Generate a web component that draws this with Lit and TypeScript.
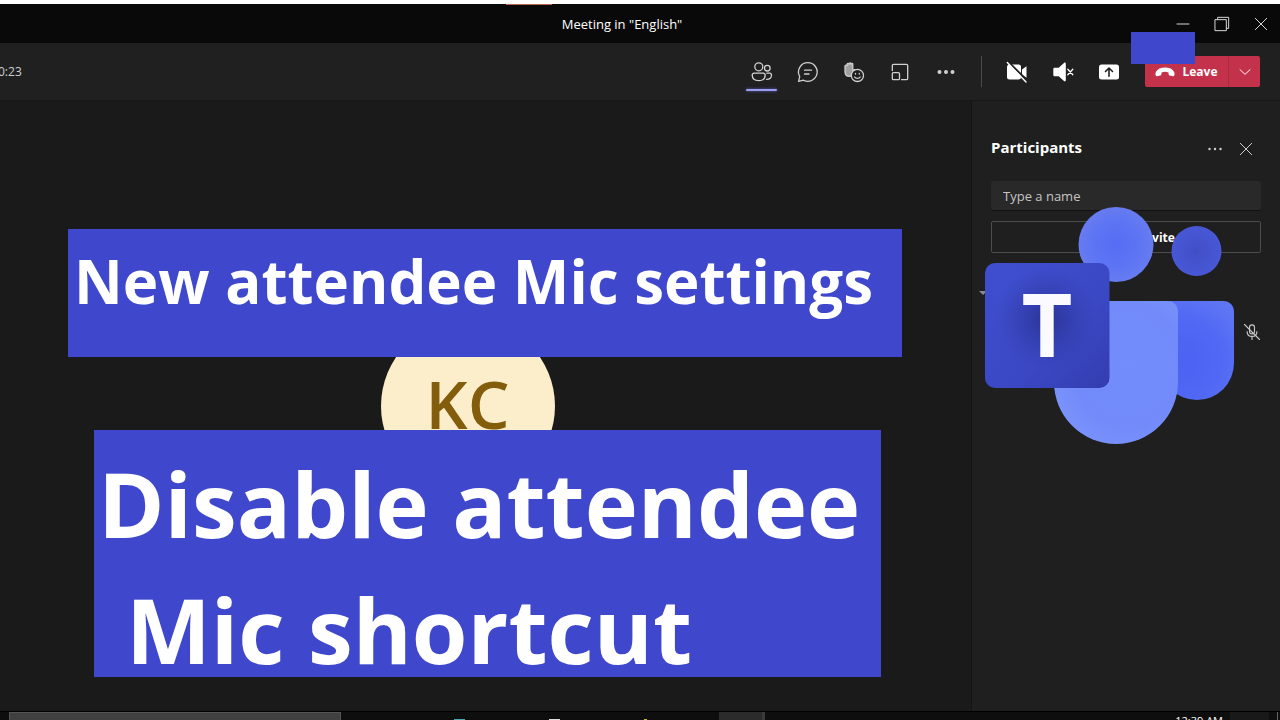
import { LitElement, html, css, svg } from "lit";
import { customElement } from "lit/decorators.js";

const line = (body: unknown, size = 24) => html`<svg
  class="line ${size < 20 ? "compact" : ""}"
  width=${size}
  height=${size}
  viewBox="0 0 24 24"
  aria-hidden="true"
>${body}</svg>`;

const people = line(svg`
  <circle cx="8.8" cy="6.8" r="4"/><circle cx="17.3" cy="8.2" r="2.8"/>
  <path d="M4.100 13.200h9.200a1.900 1.900 0 0 1 1.900 1.900c0 3.600-2.600 5.600-6.400 5.600s-6.600-2-6.600-5.600a1.900 1.900 0 0 1 1.900-1.900z"/>
  <path d="M16.800 13.200h3a1.700 1.700 0 0 1 1.700 1.700c0 2.900-1.700 4.400-5 4.400"/>`);

const chat = line(svg`
  <path d="M11.800 2.700a9.300 9.300 0 1 1-4.300 17.500l-4.900 1.100 1.100-4.700A9.300 9.300 0 0 1 11.800 2.700z"/>
  <path d="M8.500 10.200h7M8.500 14h4.500"/>`);

const reactions = line(svg`
  <path class="palm" d="M3 6v5.800c0 2.900 2 4.600 4.600 4.600 1.500 0 2.400-.6 3.100-1.700l3.300-4.500c-.9-1.100-2.300-.6-3.200.5V4.300c0-1.100-1.600-1.100-1.700 0 0-1.900-2-1.900-2 0 0-1.300-1.900-1.300-1.900 0v1.500C5.200 4.900 3 4.900 3 6z"/>
  <circle class="face" cx="15.400" cy="15.400" r="6.100"/>
  <path d="M12.600 17c1.300 1.900 4.300 1.900 5.600 0M13.500 13.300v.7M17.300 13.300v.7"/>`);

const rooms = line(svg`
  <path d="M4.300 10.500V5.600a1.300 1.300 0 0 1 1.300-1.300h12.800a1.300 1.300 0 0 1 1.300 1.300v12.800a1.300 1.300 0 0 1-1.300 1.300h-4.900"/>
  <rect x="4.300" y="12.600" width="7.200" height="7.100" rx="1.200"/>`);

const dots = (r: number, gap: number) => line(svg`
  <g class="solid"><circle cx=${12 - gap} cy="12" r=${r}/><circle cx="12" cy="12" r=${r}/><circle cx=${12 + gap} cy="12" r=${r}/></g>`);

const cameraOff = line(svg`
  <path class="solid" d="M4.500 4.500h9a2.500 2.500 0 0 1 2.500 2.500v10a2.500 2.500 0 0 1-2.500 2.500h-9A2.500 2.500 0 0 1 2 17V7a2.500 2.500 0 0 1 2.500-2.500zM17 9.500l4.500-3.300v11.600L17 14.500z"/>
  <path class="gap" d="M3 1.500 22.500 21"/>
  <path class="slash" d="M2.300 2.500 21 22"/>`);

const speakerOff = line(svg`
  <path class="solid" d="M3.500 7.800h4.200L13 2.900c.7-.6 1.800-.2 1.800.8v16.600c0 1-1.100 1.400-1.800.8l-5.300-4.900H3.500A1.200 1.200 0 0 1 2.300 15V9a1.200 1.200 0 0 1 1.200-1.200z"/>
  <path d="m16.800 9.300 5 5.400m0-5.400-5 5.400"/>`);

const share = line(svg`
  <rect class="solid" x="2" y="4.500" width="20" height="15" rx="2.500"/>
  <path class="ink" d="M12 16.300V8.200m-3.500 3.300L12 8l3.500 3.500"/>`);

const hangUp = html`<svg width="20" height="12" viewBox="0 0 20 12" aria-hidden="true">
  <path fill="#fff" d="M10 1.500c4.200 0 7.600 1.600 9 4.200.7 1.400.6 2.900.2 3.900-.2.600-.7.800-1.300.7l-3.200-.8c-.6-.1-.9-.5-1-1.100l-.3-2c-2.200-.8-4.600-.8-6.800 0l-.3 2c-.1.600-.4 1-1 1.100l-3.200.8c-.6.100-1.100-.1-1.300-.7-.4-1-.5-2.500.2-3.900 1.400-2.600 4.800-4.200 9-4.200z"/>
</svg>`;

const chevron = line(svg`<path d="m4.500 8.500 7.500 7 7.500-7"/>`, 16);
const cross = line(svg`<path d="m3.500 3.500 17 17m0-17-17 17"/>`, 16);
const minimise = line(svg`<path d="M3 12h18"/>`, 16);
const restore = line(svg`<path d="M2 5.500h16.500V22H2zM5.500 5V2H22v16.500h-3"/>`, 16);
const micOff = line(svg`
  <rect x="8.700" y="2.500" width="6.600" height="12" rx="3.300"/>
  <path d="M5.500 11.500c0 4 2.800 6.300 6.500 6.300s6.500-2.300 6.500-6.300M12 18v4"/>
  <path d="m2 2 20 20"/>`, 18);

@customElement("teams-logo")
export class TeamsLogo extends LitElement {
  static styles = css`
    :host { display: block; }
    svg { display: block; width: 100%; height: auto; }
    text { font-family: "Open Sans", "Noto Sans", sans-serif; font-weight: 700; font-size: 88px; fill: #fafaff; }
  `;
  render() {
    return html`<svg viewBox="0 0 249 237" role="img" aria-label="Teams">
      <defs>
        <radialGradient id="head"><stop offset="0" stop-color="#566df4"/><stop offset=".6" stop-color="#5d74f4"/><stop offset="1" stop-color="#677cf0"/></radialGradient>
        <radialGradient id="small"><stop offset="0" stop-color="#414fc6"/><stop offset="1" stop-color="#4858d6"/></radialGradient>
        <radialGradient id="body" cx=".6" cy=".45" r=".7"><stop offset="0" stop-color="#738dfd"/><stop offset=".6" stop-color="#728afa"/><stop offset="1" stop-color="#7d95fb"/></radialGradient>
        <radialGradient id="side" cx=".45" cy=".6" r=".7"><stop offset="0" stop-color="#4b62f3"/><stop offset=".6" stop-color="#5068f4"/><stop offset="1" stop-color="#5e76f4"/></radialGradient>
        <linearGradient id="tile" x1="0" y1="0" x2="1" y2="1"><stop offset="0" stop-color="#3f4fd0"/><stop offset=".6" stop-color="#3b48c4"/><stop offset="1" stop-color="#333db0"/></linearGradient>
        <radialGradient id="shade"><stop offset="0" stop-color="#262f8c" stop-opacity=".85"/><stop offset="1" stop-color="#303ca8" stop-opacity="0"/></radialGradient>
      </defs>
      <circle cx="131" cy="37.500" r="37.500" fill="url(#head)"/>
      <circle cx="211.500" cy="44" r="25" fill="url(#small)"/>
      <path fill="url(#side)" d="M150 94h89a10 10 0 0 1 10 10v52a37 37 0 0 1-74 0z"/>
      <path fill="url(#body)" d="M69 94h114a10 10 0 0 1 10 10v71a62 62 0 0 1-124 0z"/>
      <rect y="56" width="124.500" height="125" rx="10" fill="url(#tile)"/>
      <ellipse cx="62" cy="112" rx="50" ry="52" fill="url(#shade)"/>
      <text x="62" y="150" text-anchor="middle">T</text>
    </svg>`;
  }
}

@customElement("app-root")
export class AppRoot extends LitElement {
  static styles = css`
    * { box-sizing: border-box; }
    :host {
      display: flex;
      flex-direction: column;
      position: relative;
      height: 100vh;
      overflow: hidden;
      background: #1a1a1a;
      color: #fff;
      font-family: "Open Sans", "Noto Sans", sans-serif;
      font-size: 12px;
    }
    button {
      display: flex;
      align-items: center;
      justify-content: center;
      padding: 0;
      border: 0;
      background: none;
      color: inherit;
      font: inherit;
    }
    svg { display: block; flex: none; }
    .line { fill: none; stroke: currentColor; stroke-width: 1.3; stroke-linecap: round; stroke-linejoin: round; }
    .compact { stroke-width: 1.5; }
    .solid { fill: currentColor; stroke: none; }
    .palm { fill: #a0a0a0; }
    .face { fill: #202020; }
    .gap { stroke: #202020; stroke-width: 2; }
    .slash { stroke-width: 1.4; }
    .ink { stroke: #202020; stroke-width: 1.6; }

    .strip { height: 4px; flex: none; background: #fff; }
    .titlebar {
      position: relative;
      display: grid;
      grid-template-columns: 1fr auto 1fr;
      align-items: center;
      height: 39px;
      flex: none;
      background: #090909;
    }
    .accent { position: absolute; top: 0; left: 506px; width: 46px; height: 1px; background: #b5664a; }
    .title { grid-column: 2; margin: 0 36px 0 0; font-size: 13px; font-weight: 400; }
    .window { display: flex; justify-content: flex-end; color: #d8d8d8; }
    .window button { width: 39px; height: 39px; }

    .toolbar {
      display: flex;
      align-items: center;
      height: 58px;
      flex: none;
      padding-right: 20px;
      background: #202020;
      border-bottom: 1px solid #181818;
      color: #d0d0d0;
    }
    .clock { margin-left: -2px; margin-right: auto; }
    .tool { position: relative; width: 46px; height: 46px; }
    .active::after {
      content: "";
      position: absolute;
      left: 7px;
      right: 8px;
      bottom: 4px;
      height: 2px;
      border-radius: 1px;
      background: #9a9cf0;
      box-shadow: 0 0 3px #6264c8;
    }
    .divider { width: 1px; height: 31px; margin: 0 12px; background: #4a4a4a; }
    .white { color: #fff; }
    .leave { display: flex; height: 31px; margin-left: 13px; border-radius: 2px; overflow: hidden; background: #c4314b; color: #fff; }
    .hang { width: 83px; gap: 7px; font-weight: 700; }
    .more { width: 32px; border-left: 1px solid #a92a41; }

    .content { display: flex; flex: 1; min-height: 0; }
    .stage { position: relative; flex: 1; min-width: 0; display: flex; justify-content: center; padding: 218px 36px 0 0; }
    .avatar {
      display: flex;
      align-items: center;
      justify-content: center;
      width: 174px;
      height: 174px;
      padding-bottom: 6px;
      border-radius: 50%;
      background: #fdeecb;
      color: #835c0c;
      font-size: 66px;
      font-weight: 600;
    }
    .panel { position: relative; width: 309px; flex: none; padding: 32px 19px 0; background: #1f1f1f; border-left: 1px solid #141414; }
    .head { display: flex; align-items: center; height: 32px; }
    .heading { margin: 0 auto 4px 0; font-size: 15px; line-height: 20px; font-weight: 700; }
    .head button { width: 31px; height: 32px; color: #d0d0d0; }
    .name {
      display: block;
      width: 100%;
      height: 30px;
      margin-top: 16px;
      padding: 0 12px;
      border: 0;
      border-bottom: 1px solid #111;
      border-radius: 3px;
      background: #292929;
      color: #fff;
      font: inherit;
      font-size: 13px;
    }
    .name::placeholder { color: #c4c4c4; opacity: 1; }
    .invite { width: 100%; height: 32px; margin-top: 10px; padding-left: 26px; border: 1px solid #4c4c4c; border-radius: 2px; font-weight: 700; }
    .group { width: 8px; height: 16px; margin: 32px 0 0 -12px; }
    .caret { border: 4px solid transparent; border-top-color: #8a8a8a; border-bottom: 0; }
    .person { display: flex; justify-content: flex-end; margin-top: 22px; color: #c8c8c8; }
    .mic { width: 18px; height: 18px; }
    .logo { position: absolute; top: 106px; left: 13px; width: 249px; }

    .banner { position: absolute; background: #3f48cc; font-weight: 700; white-space: nowrap; margin: 0; }
    .first { top: 128px; left: 68px; width: 834px; height: 128px; padding-left: 6px; font-size: 60px; line-height: 104px; }
    .second { top: 329px; left: 94px; width: 787px; height: 247px; padding: 10px 0 0 4px; font-size: 90px; line-height: 126px; }
    .indent { display: block; padding-left: 28px; }
    .patch { position: absolute; top: 32px; right: 85px; width: 64px; height: 32px; background: #3f48cc; }

    .taskbar { display: flex; height: 9px; flex: none; overflow: hidden; background: #0e0e0e; padding-left: 9px; border-top: 1px solid #000; }
    .search { width: 332px; background: #404040; border: 1px solid #555; border-bottom: 0; }
    .apps { display: flex; flex: 1; align-items: flex-end; padding-left: 113px; gap: 84px; }
    .app { width: 11px; height: 1px; }
    .teal { background: #4aa5b5; }
    .pale { background: #ddd; }
    .gold { width: 3px; background: #c9b02e; }
    .open { align-self: stretch; width: 46px; height: auto; margin-left: -12px; background: #2b2b2b; border-right: 3px solid #3a3a3a; }
    .time { height: 9px; padding-top: 3px; font-size: 11px; line-height: 12px; margin-right: 7px; }
    .tray { width: 39px; margin-right: 8px; background: #191919; }
    .edge { width: 1px; margin-right: 2px; background: #666; }
  `;

  private tool(label: string, icon: unknown, extra = "") {
    return html`<button class="tool ${extra}" aria-label=${label}>${icon}</button>`;
  }

  render() {
    return html`
      <div class="strip"></div>
      <header class="titlebar">
        <span class="accent"></span>
        <h1 class="title">Meeting in "English"</h1>
        <div class="window">
          <button aria-label="Minimise">${minimise}</button>
          <button aria-label="Restore">${restore}</button>
          <button aria-label="Close">${cross}</button>
        </div>
      </header>
      <nav class="toolbar">
        <span class="clock">0:23</span>
        ${this.tool("Participants", people, "active")}
        ${this.tool("Chat", chat)}
        ${this.tool("Reactions", reactions)}
        ${this.tool("Rooms", rooms)}
        ${this.tool("More", dots(2, 6.5))}
        <span class="divider"></span>
        ${this.tool("Camera off", cameraOff, "white")}
        ${this.tool("Speaker off", speakerOff, "white")}
        ${this.tool("Share", share, "white")}
        <div class="leave">
          <button class="hang">${hangUp}Leave</button>
          <button class="more" aria-label="Leave options">${chevron}</button>
        </div>
      </nav>
      <div class="content">
        <main class="stage">
          <div class="avatar">KC</div>
          <h2 class="banner first">New attendee Mic settings</h2>
          <h2 class="banner second">Disable attendee<span class="indent">Mic shortcut</span></h2>
        </main>
        <aside class="panel">
          <div class="head">
            <h2 class="heading">Participants</h2>
            <button aria-label="More options">${dots(1.2, 5.5)}</button>
            <button aria-label="Close panel">${cross}</button>
          </div>
          <input class="name" aria-label="Type a name" placeholder="Type a name" />
          <button class="invite">Share invite</button>
          <button class="group" aria-label="Toggle list"><span class="caret"></span></button>
          <div class="person"><button class="mic" aria-label="Muted">${micOff}</button></div>
          <teams-logo class="logo"></teams-logo>
        </aside>
      </div>
      <footer class="taskbar">
        <span class="search"></span>
        <div class="apps">
          <span class="app teal"></span>
          <span class="app pale"></span>
          <span class="app gold"></span>
          <span class="app open"></span>
        </div>
        <span class="time">12:39 AM</span>
        <span class="tray"></span>
        <span class="edge"></span>
      </footer>
      <div class="patch"></div>
    `;
  }
}
